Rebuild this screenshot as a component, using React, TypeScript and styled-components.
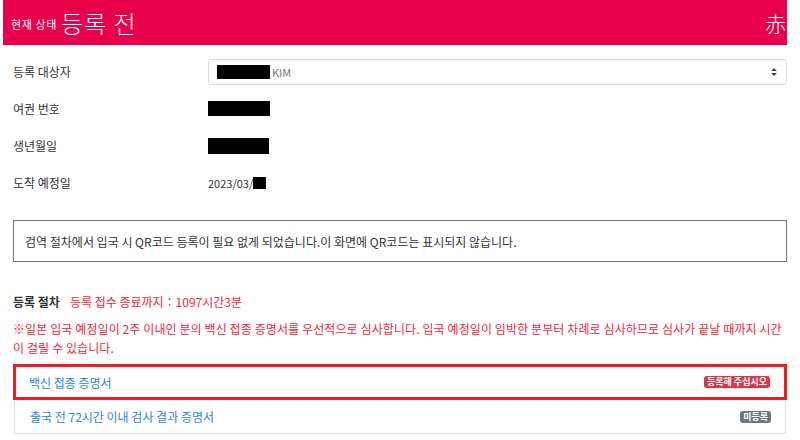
import React from 'react';
import styled, { createGlobalStyle } from 'styled-components';

const GlobalStyle = createGlobalStyle`
  body {
    margin: 0;
    background: #fff;
    font-family: 'Noto Sans CJK KR', 'Noto Sans', sans-serif;
    font-size: 12px;
    color: #333;
  }
`;

const Page = styled.div`
  width: 800px;
  height: 440px;
  overflow: hidden;
  padding: 0 13px 0 3px;
  box-sizing: border-box;
`;

const Header = styled.div`
  display: flex;
  align-items: center;
  height: 45px;
  background: #e9004c;
  color: #fff;
  padding: 0 1px 0 8px;
`;

const StatusLabel = styled.span`
  font-size: 11px;
  letter-spacing: 0.6px;
  margin-right: 4px;
  margin-top: 3px;
`;

const StatusValue = styled.span`
  font-size: 24px;
  font-weight: 300;
  letter-spacing: 1px;
  flex: 1;
`;

const Kanji = styled.span`
  font-family: 'Noto Sans CJK JP', sans-serif;
  font-size: 21px;
  font-weight: 300;
`;

const Body = styled.div`
  padding: 0 0 0 10px;
`;

const InfoTable = styled.div`
  display: grid;
  grid-template-columns: 195px 1fr;
  grid-auto-rows: 37px;
  align-items: center;
  margin-top: 8px;
`;

const Label = styled.div`
  font-size: 12px;
  color: #333;
`;

const Value = styled.div`
  display: flex;
  align-items: center;
  font-size: 11px;
  color: #333;
`;

const Redacted = styled.span<{ $w: number; $h?: number }>`
  display: inline-block;
  width: ${p => p.$w}px;
  height: ${p => p.$h ?? 15}px;
  background: #000;
`;

const Select = styled.div`
  display: flex;
  align-items: center;
  height: 26px;
  border: 1px solid #dcdcdc;
  border-radius: 3px;
  padding: 0 8px;
  box-sizing: border-box;
  font-size: 11px;
  color: #777;
`;

const SelectText = styled.span`
  flex: 1;
  display: flex;
  align-items: center;
  gap: 2px;
`;

const Notice = styled.div`
  margin-top: 19px;
  height: 40px;
  border: 1px solid #777;
  display: flex;
  align-items: center;
  padding: 0 11px;
  font-size: 12px;
  color: #333;
`;

const ProcedureHead = styled.div`
  display: flex;
  align-items: baseline;
  margin-top: 31px;
  font-size: 12px;
`;

const ProcTitle = styled.span`
  font-weight: bold;
  color: #333;
  margin-right: 10px;
`;

const Deadline = styled.span`
  color: #f0283c;
`;

const Warning = styled.p`
  margin: 9px 0 0;
  color: #f0283c;
  font-size: 12px;
  line-height: 19px;
  letter-spacing: 0.1px;
`;

const List = styled.div`
  margin-top: 7px;
  display: flex;
  flex-direction: column;
`;

const Item = styled.div<{ $active?: boolean }>`
  display: flex;
  align-items: center;
  justify-content: space-between;
  height: ${p => (p.$active ? 36 : 34)}px;
  padding: 0 14px 0 ${p => (p.$active ? 13 : 15)}px;
  box-sizing: border-box;
  border: ${p => (p.$active ? '3px solid #ee1c25' : '1px solid #e4e4e4')};
  border-top: ${p => (p.$active ? '3px solid #ee1c25' : 'none')};
  border-radius: ${p => (p.$active ? '0' : '0 0 3px 3px')};
  ${p => (p.$active ? '' : 'margin: 0 1px;')}
  font-size: 12px;
  color: #2f86d8;
`;

const Badge = styled.span<{ $tone: 'red' | 'gray' }>`
  font-size: 9px;
  font-weight: bold;
  color: #fff;
  padding: 0 3px;
  line-height: 12px;
  border-radius: 3px;
  background: ${p => (p.$tone === 'red' ? '#dc3545' : '#6c757d')};
`;

const Arrows = () => (
  <svg width="8" height="10" viewBox="0 0 8 10">
    <path d="M4 1 L7 4 L1 4 Z M4 9 L7 6 L1 6 Z" fill="#444" />
  </svg>
);

export default function App() {
  return (
    <Page>
      <GlobalStyle />
      <Header>
        <StatusLabel>현재 상태</StatusLabel>
        <StatusValue>등록 전</StatusValue>
        <Kanji>赤</Kanji>
      </Header>
      <Body>
        <InfoTable>
          <Label>등록 대상자</Label>
          <Select>
            <SelectText>
              <Redacted $w={53} $h={14} />
              KIM
            </SelectText>
            <Arrows />
          </Select>
          <Label>여권 번호</Label>
          <Value><Redacted $w={62} $h={15} /></Value>
          <Label>생년월일</Label>
          <Value><Redacted $w={61} $h={16} /></Value>
          <Label>도착 예정일</Label>
          <Value>2023/03/<Redacted $w={13} $h={12} /></Value>
        </InfoTable>
        <Notice>검역 절차에서 입국 시 QR코드 등록이 필요 없게 되었습니다.이 화면에 QR코드는 표시되지 않습니다.</Notice>
        <ProcedureHead>
          <ProcTitle>등록 절차</ProcTitle>
          <Deadline>등록 접수 종료까지：1097시간3분</Deadline>
        </ProcedureHead>
        <Warning>
          ※일본 입국 예정일이 2주 이내인 분의 백신 접종 증명서를 우선적으로 심사합니다. 입국 예정일이 임박한 분부터 차례로 심사하므로 심사가 끝날 때까지 시간이 걸릴 수 있습니다.
        </Warning>
        <List>
          <Item $active>
            백신 접종 증명서
            <Badge $tone="red">등록해 주십시오</Badge>
          </Item>
          <Item>
            출국 전 72시간 이내 검사 결과 증명서
            <Badge $tone="gray">미등록</Badge>
          </Item>
        </List>
      </Body>
    </Page>
  );
}
